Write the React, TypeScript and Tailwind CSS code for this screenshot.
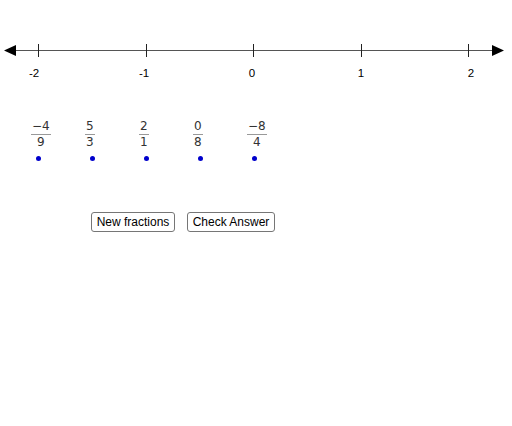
import React from "react";

const ticks = [
  { x: 38.5, lx: 34, label: "-2" },
  { x: 146.5, lx: 144, label: "-1" },
  { x: 253.5, lx: 252, label: "0" },
  { x: 361.5, lx: 361, label: "1" },
  { x: 468.5, lx: 471, label: "2" },
];

const fractions = [
  { num: "−4", den: "9" },
  { num: "5", den: "3" },
  { num: "2", den: "1" },
  { num: "0", den: "8" },
  { num: "−8", den: "4" },
];

function NumberLine() {
  return (
    <svg width={512} height={90} className="block">
      <line x1={12} y1={50.5} x2={496} y2={50.5} stroke="#555" strokeWidth={1} />
      <polygon points="4,50.5 16,45 16,56" fill="#000" />
      <polygon points="504,50.5 492,45 492,56" fill="#000" />
      {ticks.map((t) => (
        <g key={t.label}>
          <line x1={t.x} y1={44} x2={t.x} y2={57} stroke="#222" strokeWidth={1} />
          <text
            x={t.lx}
            y={77}
            fontSize={11.5}
            textAnchor="middle"
            fill="#000"
            fontFamily="Liberation Sans, Arial, sans-serif"
          >
            {t.label}
          </text>
        </g>
      ))}
    </svg>
  );
}

export default function App() {
  return (
    <div className="w-[512px] h-[426px] bg-white font-['Liberation_Sans',Arial,sans-serif]">
      <NumberLine />

      {/* Fractions with their points */}
      <div className="flex pl-[31px] mt-[29px]">
        {fractions.map((f, i) => (
          <div key={i} className="w-[54px] flex flex-col items-start">
            <div className="inline-flex flex-col items-center font-['DejaVu_Sans',sans-serif] text-[12px] leading-[14px] text-[#333]">
              <span className="px-[1px]">{f.num}</span>
              <span className="block w-full h-px bg-[#999] mt-px"></span>
              <span>{f.den}</span>
            </div>
            <span className="block w-[5px] h-[5px] rounded-full bg-[#0000cc] ml-[5px] mt-[7px]"></span>
          </div>
        ))}
      </div>

      {/* Buttons */}
      <div className="flex gap-[12px] ml-[91px] mt-[51px]">
        <button className="w-[84px] h-[20px] border border-[#767676] rounded-[3px] bg-white text-[12px] leading-none text-black">
          New fractions
        </button>
        <button className="w-[88px] h-[20px] border border-[#767676] rounded-[3px] bg-white text-[12px] leading-none text-black">
          Check Answer
        </button>
      </div>
    </div>
  );
}
